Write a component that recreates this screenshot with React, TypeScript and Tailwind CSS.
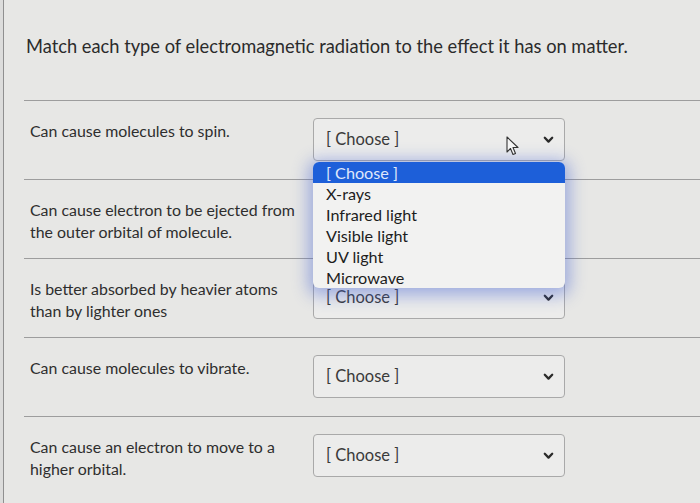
import React from "react";

const rows = [
  { text: "Can cause molecules to spin." },
  { text: "Can cause electron to be ejected from the outer orbital of molecule.", covered: true },
  { text: "Is better absorbed by heavier atoms than by lighter ones" },
  { text: "Can cause molecules to vibrate." },
  { text: "Can cause an electron to move to a higher orbital." },
];

const options = ["[ Choose ]", "X-rays", "Infrared light", "Visible light", "UV light", "Microwave"];

function Chevron() {
  return (
    <svg width="11" height="8" viewBox="0 0 11 8" fill="none">
      <path d="M1.8 1.8 L5.5 5.6 L9.2 1.8" stroke="#2a2a2a" strokeWidth="2.3" strokeLinecap="round" strokeLinejoin="round" />
    </svg>
  );
}

function Select({ covered }: { covered?: boolean }) {
  return (
    <div className="w-[252px] h-[43px] rounded-[4px] border border-[#a9a9a9] bg-[#ececeb] flex items-center justify-between pl-[12px] pr-[10px]">
      {/* the open list lies over this one, so its label is not shown */}
      {!covered && <span className="text-[16.5px] text-[#3a3a3a]">[ Choose ]</span>}
      <span className="ml-auto"><Chevron /></span>
    </div>
  );
}

export default function App() {
  return (
    <div className="relative w-[700px] h-[503px] overflow-hidden bg-[#dcdcdb] font-['Lato',sans-serif]">
      <div className="ml-[3px] h-full border-l border-[#8f8f8f] bg-[#e7e7e5]">
        <p className="pt-[34px] pl-[22px] text-[18.3px] leading-[24px] text-[#2b2b2b]">
          Match each type of electromagnetic radiation to the effect it has on matter.
        </p>
        <div className="mt-[42px] ml-[20px]">
          {rows.map((r, i) => (
            <div key={i} className="h-[79px] border-t border-[#9d9d9d] flex items-start">
              <div className="w-[289px] pl-[6px] pr-[8px] pt-[19px] text-[15.9px] leading-[22px] text-[#2e2e2e]">
                {r.text}
              </div>
              <div className="mt-[17px]">
                <Select covered={r.covered} />
              </div>
            </div>
          ))}
        </div>
      </div>

      {/* open dropdown list */}
      <div className="absolute left-[313px] top-[162px] w-[252px] rounded-[6px] bg-[#f2f2f1] shadow-[0_3px_16px_5px_rgba(70,100,210,0.45)]">
        {options.map((o, i) => (
          <div
            key={o + i}
            className={
              i === 0
                ? "h-[21px] leading-[21px] pl-[13px] text-[16.2px] bg-[#1d5fd9] text-[#dfe7fb] rounded-t-[6px]"
                : "h-[21px] leading-[21px] pl-[13px] text-[16.2px] text-[#1d1d1d]"
            }
          >
            {o}
          </div>
        ))}
      </div>

      {/* mouse pointer */}
      <svg className="absolute left-[506px] top-[136px]" width="14" height="20" viewBox="0 0 14 20">
        <path d="M1 1 L1 16 L4.5 12.5 L7 18.5 L9.5 17.5 L7 11.5 L12 11.5 Z" fill="#f5f5f5" stroke="#333" strokeWidth="1.1" strokeLinejoin="round" />
      </svg>
    </div>
  );
}
